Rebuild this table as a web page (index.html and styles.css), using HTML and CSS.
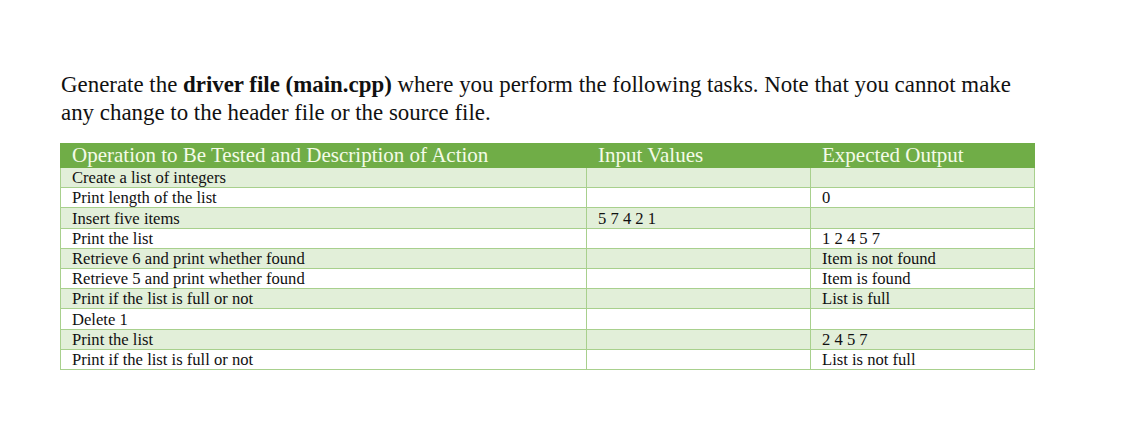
FILE: index.html
```html
<!DOCTYPE html>
<html>
<head>
<meta charset="utf-8">
<link rel="stylesheet" href="styles.css">
</head>
<body>
<div class="page">
  <p class="intro">Generate the <b>driver file (main.cpp)</b> where you perform the following tasks. Note that you cannot make any change to the header file or the source file.</p>
  <table class="tests">
    <colgroup><col class="c1"><col class="c2"><col class="c3"></colgroup>
    <thead>
      <tr><th>Operation to Be Tested and Description of Action</th><th>Input Values</th><th>Expected Output</th></tr>
    </thead>
    <tbody>
      <tr class="alt"><td>Create a list of integers</td><td></td><td></td></tr>
      <tr><td>Print length of the list</td><td></td><td>0</td></tr>
      <tr class="alt"><td>Insert five items</td><td>5 7 4 2 1</td><td></td></tr>
      <tr><td>Print the list</td><td></td><td>1 2 4 5 7</td></tr>
      <tr class="alt"><td>Retrieve 6 and print whether found</td><td></td><td>Item is not found</td></tr>
      <tr><td>Retrieve 5 and print whether found</td><td></td><td>Item is found</td></tr>
      <tr class="alt"><td>Print if the list is full or not</td><td></td><td>List is full</td></tr>
      <tr><td>Delete 1</td><td></td><td></td></tr>
      <tr class="alt"><td>Print the list</td><td></td><td>2 4 5 7</td></tr>
      <tr><td>Print if the list is full or not</td><td></td><td>List is not full</td></tr>
    </tbody>
  </table>
</div>
</body>
</html>
```
FILE: styles.css
```css
html, body {
  margin: 0;
  padding: 0;
  background: #ffffff;
}
.page {
  padding: 71px 0 0 61px;
  font-family: "Liberation Serif", "Times New Roman", serif;
  color: #111111;
}
.intro {
  margin: 0;
  width: 975px;
  font-size: 22.9px;
  line-height: 28px;
}
.intro b {
  font-weight: bold;
}
.tests {
  margin: 16px 0 0 -1px;
  border-collapse: collapse;
  width: 974px;
  table-layout: fixed;
}
.c1 { width: 526px; }
.c2 { width: 224px; }
.c3 { width: 224px; }
.tests th {
  background: #70ad47;
  color: #f4fbe8;
  font-weight: normal;
  font-size: 21px;
  text-align: left;
  height: 23px;
  padding: 0 0 0 11px;
  line-height: 23px;
  vertical-align: bottom;
  border: 1px solid #70ad47;
}
.tests td {
  font-size: 16.6px;
  line-height: 18px;
  height: 19.2px;
  padding: 0 0 0 11px;
  border: 1px solid #a8d08d;
  white-space: nowrap;
  vertical-align: bottom;
}
.tests tr.alt td {
  background: #e2efd9;
}
```
